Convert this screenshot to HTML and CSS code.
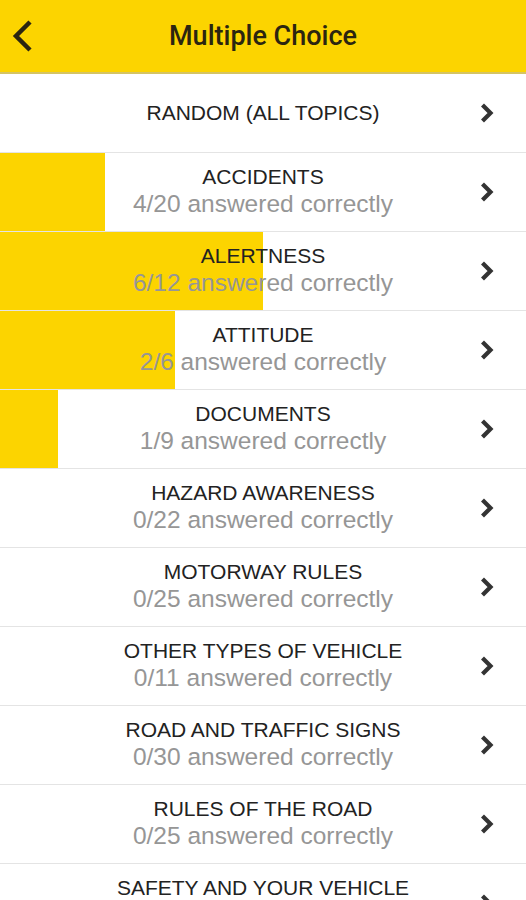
FILE: index.html
```html
<!DOCTYPE html>
<html>
<head>
<meta charset="utf-8">
<link rel="stylesheet" href="styles.css">
</head>
<body>
<header class="topbar">
  <span class="back">
    <svg width="22" height="34" viewBox="0 0 22 34"><polyline points="18,3 4,17 18,31" fill="none" stroke="#2b2510" stroke-width="4.5" stroke-linejoin="miter"/></svg>
  </span>
  <h1 class="title">Multiple Choice</h1>
  <span></span>
</header>
<ul class="list">
  <li class="row single">
    <span></span>
    <div class="text"><div class="name">RANDOM (ALL TOPICS)</div></div>
    <span class="chev"><svg width="14" height="20" viewBox="0 0 14 20"><polyline points="2.5,2 10.5,10 2.5,18" fill="none" stroke="#333" stroke-width="4.2"/></svg></span>
  </li>
  <li class="row">
    <div class="bar" style="width:20%"></div>
    <span></span>
    <div class="text"><div class="name">ACCIDENTS</div><div class="score">4/20 answered correctly</div></div>
    <span class="chev"><svg width="14" height="20" viewBox="0 0 14 20"><polyline points="2.5,2 10.5,10 2.5,18" fill="none" stroke="#333" stroke-width="4.2"/></svg></span>
  </li>
  <li class="row">
    <div class="bar" style="width:50%"></div>
    <span></span>
    <div class="text"><div class="name">ALERTNESS</div><div class="score">6/12 answered correctly</div></div>
    <span class="chev"><svg width="14" height="20" viewBox="0 0 14 20"><polyline points="2.5,2 10.5,10 2.5,18" fill="none" stroke="#333" stroke-width="4.2"/></svg></span>
  </li>
  <li class="row">
    <div class="bar" style="width:33.33%"></div>
    <span></span>
    <div class="text"><div class="name">ATTITUDE</div><div class="score">2/6 answered correctly</div></div>
    <span class="chev"><svg width="14" height="20" viewBox="0 0 14 20"><polyline points="2.5,2 10.5,10 2.5,18" fill="none" stroke="#333" stroke-width="4.2"/></svg></span>
  </li>
  <li class="row">
    <div class="bar" style="width:11.11%"></div>
    <span></span>
    <div class="text"><div class="name">DOCUMENTS</div><div class="score">1/9 answered correctly</div></div>
    <span class="chev"><svg width="14" height="20" viewBox="0 0 14 20"><polyline points="2.5,2 10.5,10 2.5,18" fill="none" stroke="#333" stroke-width="4.2"/></svg></span>
  </li>
  <li class="row">
    <span></span>
    <div class="text"><div class="name">HAZARD AWARENESS</div><div class="score">0/22 answered correctly</div></div>
    <span class="chev"><svg width="14" height="20" viewBox="0 0 14 20"><polyline points="2.5,2 10.5,10 2.5,18" fill="none" stroke="#333" stroke-width="4.2"/></svg></span>
  </li>
  <li class="row">
    <span></span>
    <div class="text"><div class="name">MOTORWAY RULES</div><div class="score">0/25 answered correctly</div></div>
    <span class="chev"><svg width="14" height="20" viewBox="0 0 14 20"><polyline points="2.5,2 10.5,10 2.5,18" fill="none" stroke="#333" stroke-width="4.2"/></svg></span>
  </li>
  <li class="row">
    <span></span>
    <div class="text"><div class="name">OTHER TYPES OF VEHICLE</div><div class="score">0/11 answered correctly</div></div>
    <span class="chev"><svg width="14" height="20" viewBox="0 0 14 20"><polyline points="2.5,2 10.5,10 2.5,18" fill="none" stroke="#333" stroke-width="4.2"/></svg></span>
  </li>
  <li class="row">
    <span></span>
    <div class="text"><div class="name">ROAD AND TRAFFIC SIGNS</div><div class="score">0/30 answered correctly</div></div>
    <span class="chev"><svg width="14" height="20" viewBox="0 0 14 20"><polyline points="2.5,2 10.5,10 2.5,18" fill="none" stroke="#333" stroke-width="4.2"/></svg></span>
  </li>
  <li class="row">
    <span></span>
    <div class="text"><div class="name">RULES OF THE ROAD</div><div class="score">0/25 answered correctly</div></div>
    <span class="chev"><svg width="14" height="20" viewBox="0 0 14 20"><polyline points="2.5,2 10.5,10 2.5,18" fill="none" stroke="#333" stroke-width="4.2"/></svg></span>
  </li>
  <li class="row last">
    <span></span>
    <div class="text"><div class="name">SAFETY AND YOUR VEHICLE</div></div>
    <span class="chev"><svg width="14" height="20" viewBox="0 0 14 20"><polyline points="2.5,2 10.5,10 2.5,18" fill="none" stroke="#333" stroke-width="4.2"/></svg></span>
  </li>
</ul>
</body>
</html>
```

FILE: styles.css
```css
html, body {
  margin: 0;
  padding: 0;
  background: #ffffff;
  font-family: "Liberation Sans", Arial, sans-serif;
}

.topbar {
  display: grid;
  grid-template-columns: 1fr auto 1fr;
  align-items: center;
  height: 72px;
  background: #fcd400;
  border-bottom: 2px solid #d5c463;
}

.back {
  display: flex;
  align-items: center;
  padding-left: 12px;
  padding-bottom: 1px;
}

.back svg {
  display: block;
}

.title {
  margin: 0;
  font-family: Roboto, "Liberation Sans", sans-serif;
  font-size: 27px;
  font-weight: 500;
  color: #2b2510;
  padding-bottom: 1px;
}

.list {
  list-style: none;
  margin: 0;
  padding: 0;
}

.row {
  position: relative;
  display: grid;
  grid-template-columns: 1fr auto 1fr;
  align-items: center;
  height: 78px;
  border-bottom: 1px solid #e4e4e4;
  overflow: hidden;
}

.bar {
  position: absolute;
  left: 0;
  top: 0;
  bottom: 0;
  background: #fcd400;
}

.text {
  position: relative;
  text-align: center;
  white-space: nowrap;
  padding-bottom: 4px;
}

.single .text {
  padding-bottom: 2px;
}

.last .text {
  align-self: start;
  padding-top: 10px;
  padding-bottom: 0;
}

.name {
  font-size: 21px;
  line-height: 27px;
  color: #222222;
}

.score {
  font-size: 24.5px;
  line-height: 27px;
  color: #969696;
}

.chev {
  position: relative;
  justify-self: end;
  padding-right: 32px;
  display: flex;
}

.last .chev {
  align-self: start;
  padding-top: 30px;
}

.chev svg {
  display: block;
}
```
